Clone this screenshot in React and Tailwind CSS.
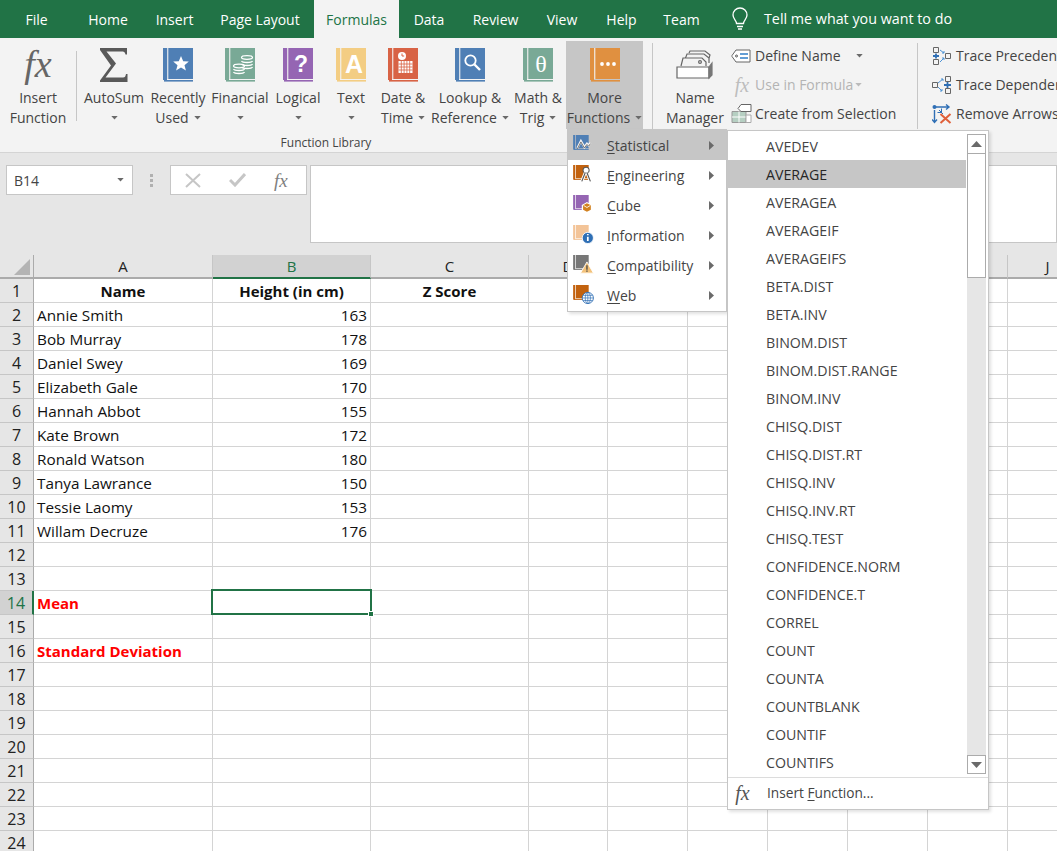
import React from 'react';

const UI = "font-['Open_Sans','Noto_Sans',sans-serif]";

const tabs = [
  ['File', 'w-[73px]'],
  ['Home', 'w-[70px]'],
  ['Insert', 'w-[63px]'],
  ['Page Layout', 'w-[108px]'],
  ['Formulas', 'w-[85px]'],
  ['Data', 'w-[60px]'],
  ['Review', 'w-[73px]'],
  ['View', 'w-[60px]'],
  ['Help', 'w-[59px]'],
  ['Team', 'w-[61px]'],
];

const functionNames = [
  'AVEDEV', 'AVERAGE', 'AVERAGEA', 'AVERAGEIF', 'AVERAGEIFS', 'BETA.DIST', 'BETA.INV', 'BINOM.DIST',
  'BINOM.DIST.RANGE', 'BINOM.INV', 'CHISQ.DIST', 'CHISQ.DIST.RT', 'CHISQ.INV', 'CHISQ.INV.RT', 'CHISQ.TEST',
  'CONFIDENCE.NORM', 'CONFIDENCE.T', 'CORREL', 'COUNT', 'COUNTA', 'COUNTBLANK', 'COUNTIF', 'COUNTIFS',
];

const people = [
  ['Annie Smith', 163], ['Bob Murray', 178], ['Daniel Swey', 169], ['Elizabeth Gale', 170], ['Hannah Abbot', 155],
  ['Kate Brown', 172], ['Ronald Watson', 180], ['Tanya Lawrance', 150], ['Tessie Laomy', 153], ['Willam Decruze', 176],
];

const colHeaders = ['A', 'B', 'C', 'D', 'E', 'F', 'G', 'H', 'I', 'J'];
const sheetCols = 'grid grid-cols-[34px_179px_158px_158px_79px_80px_80px_80px_80px_80px_80px]';

const Caret = ({ className = '' }) => (
  <svg width="7" height="4" viewBox="0 0 8 5" className={`inline-block ${className}`}>
    <path d="M0 0h8L4 4.500z" fill="#6a6a6a" />
  </svg>
);

const Book = ({ color, children }) => (
  <svg width="30" height="34" viewBox="0 0 30 34">
    <rect x="0" y="0" width="4" height="32" fill={color} />
    <rect x="4" y="0" width="26" height="31" fill={color} />
    <rect x="4.200" y="0" width="1.100" height="31" fill="#f3f3f3" />
    <rect x="1" y="32" width="29" height="1.600" fill={color} />
    {children}
  </svg>
);

const Coins = () => (
  <g fill="none" stroke="#fff" strokeWidth="1.300">
    <ellipse cx="22" cy="9.500" rx="5.500" ry="1.800" />
    <path d="M16.500 13c1 2 10 2 11 0M16.500 16c1 2 10 2 11 0M16.500 19c1 2 10 2 11 0" />
    <ellipse cx="14" cy="18" rx="5.500" ry="1.800" />
    <path d="M8.500 21c1 2 10 2 11 0M8.500 24c1 2 10 2 11 0" />
  </g>
);

function Sigma() {
  return (
    <svg width="30" height="34" viewBox="0 0 30 34">
      <path d="M1 0h27v6.500h-1.500C26 4 25 3.500 22 3.500H7.500L17 15.500 6.500 29.500H24c2 0 2.500-1 3-3.500h1.500v8H1v-1.500L12 17.500 1 2z" fill="#595959" />
    </svg>
  );
}

const bigButtons = [
  { lines: ['AutoSum', ''], w: 'w-[64px]', icon: <Sigma /> },
  { lines: ['Recently', 'Used'], w: 'w-[60px]', icon: <Book color="#4f7fb5"><path d="M18 8l2.200 5.200 5.600.4-4.300 3.600 1.400 5.400-4.900-3-4.900 3 1.400-5.400-4.300-3.600 5.600-.4z" fill="#fff" /></Book> },
  { lines: ['Financial', ''], w: 'w-[60px]', icon: <Book color="#79a996"><Coins /></Book> },
  { lines: ['Logical', ''], w: 'w-[52px]', icon: <Book color="#9565b3"><text x="18" y="24" textAnchor="middle" fontSize="23" fontWeight="700" fill="#fff" fontFamily="Liberation Sans">?</text></Book> },
  { lines: ['Text', ''], w: 'w-[50px]', icon: <Book color="#f3cd83"><text x="18" y="25" textAnchor="middle" fontSize="25" fontWeight="700" fill="#fff" fontFamily="Liberation Sans">A</text></Book> },
  {
    lines: ['Date &', 'Time'],
    w: 'w-[50px]',
    icon: (
      <Book color="#d86345">
        <circle cx="14" cy="8" r="4" fill="#fff" />
        <path d="M14 5.500V8h2.200" stroke="#d86345" strokeWidth="1" fill="none" />
        <path d="M10.500 13h14v12h-14z" fill="#fff" />
        <path d="M13.300 13v12M16.100 13v12M18.900 13v12M21.700 13v12M10.500 16h14M10.500 19h14M10.500 22h14" stroke="#d86345" strokeWidth="0.800" />
      </Book>
    ),
  },
  {
    lines: ['Lookup &', 'Reference'],
    w: 'w-[80px]',
    icon: (
      <Book color="#4f7fb5">
        <circle cx="15.500" cy="12.500" r="5.200" fill="none" stroke="#fff" strokeWidth="1.800" />
        <path d="M19.500 16.500l5.500 5.500" stroke="#fff" strokeWidth="2.400" />
      </Book>
    ),
  },
  { lines: ['Math &', 'Trig'], w: 'w-[52px]', icon: <Book color="#79a996"><text x="18" y="24" textAnchor="middle" fontSize="24" fill="#fff" fontFamily="Liberation Serif">θ</text></Book> },
];

const Fx = ({ className }) => <span className={`font-['Liberation_Serif',serif] italic ${className}`}>fx</span>;

const RibbonButton = ({ lines, w, icon, active }) => (
  <div className={`${w} flex flex-col items-center pt-[7px] h-[88px] shrink-0 ${active ? 'bg-[#c6c6c6]' : ''}`}>
    <div className="h-[40px] flex items-start">{icon}</div>
    <div className="h-[20px] leading-[20px] whitespace-nowrap">{lines[0]}</div>
    <div className="h-[20px] leading-[20px] whitespace-nowrap flex items-center gap-[5px]">
      {lines[1]}
      <Caret />
    </div>
  </div>
);

const NameManagerIcon = () => (
  <svg width="38" height="36" viewBox="0 0 38 36" fill="none" stroke="#666" strokeWidth="1.200">
    <path d="M8 14l3-8h17l5 4v5" />
    <path d="M13 5l1-2h15l5 4-1 3" />
    <path d="M5 18l2-8h19l4 4v4" fill="#f3f3f3" />
    <circle cx="24" cy="14" r="1.400" />
    <path d="M1 19h32v11H1z" fill="#fff" />
    <path d="M33 19l3-4v12l-3 3z" fill="#777" stroke="#777" />
  </svg>
);

const DefineIcon = () => (
  <svg width="20" height="14" viewBox="0 0 20 14" fill="none">
    <path d="M5 1h14v12H5L1 7.500V6.500z" stroke="#666" fill="#fff" />
    <circle cx="5.500" cy="7" r="1" stroke="#555" />
    <path d="M9 5h8M9 9h8" stroke="#2f7ec7" strokeWidth="1.300" />
  </svg>
);

const CreateIcon = () => (
  <svg width="22" height="20" viewBox="0 0 22 20" fill="none">
    <path d="M1 7.500h14v11H1z" fill="#b6cfc2" stroke="#999" />
    <path d="M8 7.500v11M1 13h14" stroke="#fff" />
    <path d="M10 .5h10v7H10L7 4.500z" fill="#fff" stroke="#666" />
    <path d="M15 11h5v7.500h-5z" fill="#fff" stroke="#aaa" />
  </svg>
);

const TracePrecedents = () => (
  <svg width="20" height="18" viewBox="0 0 20 18" fill="none">
    <path d="M1.500 .5h5v5h-5zM13.500 6.500h5v5h-5zM1.500 12.500h5v5h-5z" stroke="#666" />
    <path d="M1 9h6M4 6.500v5" stroke="#2f6fb5" strokeWidth="1.800" />
    <path d="M8 3l4 3M8 15l4-4M12 6V4M12 6h-2M12 11v2M12 11h-2" stroke="#4d93d6" />
  </svg>
);

const TraceDependents = () => (
  <svg width="20" height="18" viewBox="0 0 20 18" fill="none">
    <path d="M.5 6.500h5v5h-5zM13.500 .5h5v5h-5zM13.500 12.500h5v5h-5z" stroke="#666" />
    <path d="M12 9h7M15.500 6v6" stroke="#2f6fb5" strokeWidth="1.800" />
    <path d="M6 7l5-4M6 11l4 4M11 3H9M11 3v2M10 15H8M10 15v-2" stroke="#4d93d6" />
  </svg>
);

const RemoveArrows = () => (
  <svg width="20" height="20" viewBox="0 0 20 20" fill="none">
    <circle cx="2.500" cy="3" r="2" fill="#2f6fb5" />
    <path d="M4 3h13M14 .5L17 3l-3 2.500M2.500 6v12M0 15.500L2.500 18.500 5 15.500" stroke="#2f6fb5" strokeWidth="1.400" />
    <path d="M7 6l4 4M5.500 8.500h4v-4" stroke="#2f6fb5" />
    <path d="M8.500 10l10 9M18.500 10l-10 9" stroke="#e0603a" strokeWidth="2" />
  </svg>
);

const MenuBook = ({ color, children }) => (
  <svg width="21" height="19" viewBox="0 0 24 22" className="shrink-0">
    <rect x="0" y="0" width="2.500" height="17" fill={color} />
    <rect x="3.300" y="0" width="14.700" height="15.500" fill={color} />
    <rect x="1" y="16.300" width="17" height="1" fill={color} />
    {children}
  </svg>
);

const subMenus = [
  {
    label: 'Statistical',
    icon: (
      <MenuBook color="#4f7fb5">
        <path d="M5 15l4-8 4 7 3-4 2 2 2-3" fill="none" stroke="#f3f3f3" strokeWidth="2.600" />
        <path d="M5 16l4-8 4 7 3-4 2 2 2-3" fill="none" stroke="#666" />
      </MenuBook>
    ),
  },
  {
    label: 'Engineering',
    icon: (
      <MenuBook color="#c2620f">
        <circle cx="15" cy="6" r="3.500" fill="#fff" stroke="#555" strokeWidth="1.200" />
        <path d="M14 9l-4 10M16 9l4 10" stroke="#fff" strokeWidth="3.500" />
        <path d="M14 9l-4 10M16 9l4 10" stroke="#555" strokeWidth="1.300" />
      </MenuBook>
    ),
  },
  {
    label: 'Cube',
    icon: (
      <MenuBook color="#9565b3">
        <path d="M16 8l6 3.500v6.500l-6 3.500-6-3.500v-6.500z" fill="#fff" />
        <path d="M16 9.500l4.500 2.500v5L16 19.500 11.500 17v-5z" fill="#d2811f" />
        <path d="M12 12l4 2.500 4-2.500" stroke="#fff" fill="none" />
      </MenuBook>
    ),
  },
  {
    label: 'Information',
    icon: (
      <MenuBook color="#f3c498">
        <circle cx="17" cy="15" r="6.500" fill="#2f6fb5" stroke="#fff" />
        <path d="M17 13.500v5M17 10.500v1.500" stroke="#fff" strokeWidth="2" />
      </MenuBook>
    ),
  },
  {
    label: 'Compatibility',
    icon: (
      <MenuBook color="#777">
        <path d="M16 8l7.500 13h-15z" fill="#f3c27a" stroke="#fff" />
        <path d="M16 12v5M16 18v1.500" stroke="#444" strokeWidth="1.500" />
      </MenuBook>
    ),
  },
  {
    label: 'Web',
    icon: (
      <MenuBook color="#c2620f">
        <circle cx="17" cy="15" r="6.500" fill="#fff" stroke="#2f6fb5" />
        <path d="M10.500 15h13M17 8.500v13M11.500 12h11M11.500 18h11" stroke="#2f6fb5" strokeWidth="0.800" />
        <ellipse cx="17" cy="15" rx="3" ry="6.500" fill="none" stroke="#2f6fb5" strokeWidth="0.800" />
      </MenuBook>
    ),
  },
];

const Underlined = ({ text }) => (
  <span>
    <span className="underline underline-offset-2">{text[0]}</span>
    {text.slice(1)}
  </span>
);

const Row = ({ num, a, b, c, aClass = '', selected }) => (
  <div className={`${sheetCols} h-[24px]`}>
    <div className={`h-[24px] flex items-center justify-center border-r border-b text-[16px] ${selected ? 'bg-[#d2d2d2] text-[#217346] border-r-2 border-r-[#217346] border-b-[#c6c6c6]' : 'bg-[#e6e6e6] text-[#222] border-r-[#ababab] border-b-[#c6c6c6]'}`}>
      {num}
    </div>
    <div className={`h-[24px] border-r border-b border-[#d4d4d4] px-[3px] leading-[24px] whitespace-nowrap ${aClass}`}>{a}</div>
    <div className="relative h-[24px] border-r border-b border-[#d4d4d4] px-[3px] leading-[24px] whitespace-nowrap">
      {b}
      {selected && (
        <div className="absolute left-[-2px] top-[-2px] w-[161px] h-[26px] border-2 border-[#217346] z-10">
          <div className="absolute right-[-4px] bottom-[-4px] w-[6px] h-[6px] bg-[#217346] border border-white" />
        </div>
      )}
    </div>
    <div className="h-[24px] border-r border-b border-[#d4d4d4] text-center font-bold text-[15px] leading-[24px]">{c}</div>
    {[0, 1, 2, 3, 4, 5, 6].map((i) => (
      <div key={i} className="h-[24px] border-r border-b border-[#d4d4d4]" />
    ))}
  </div>
);

const App = () => {
  const rows = Array.from({ length: 24 }, (_, i) => i + 1);

  return (
    <div className={`${UI} relative w-[1057px] h-[851px] overflow-hidden bg-white text-[14px] text-[#444]`}>
      {/* Tabs */}
      <div className="flex items-center h-[38px] bg-[#217346] text-[14px] text-white">
        {tabs.map(([label, w]) => (
          <div
            key={label}
            className={`${w} h-full flex items-center justify-center ${label === 'Formulas' ? 'bg-[#f3f3f3] text-[#217346]' : ''}`}
          >
            {label}
          </div>
        ))}
        <svg width="18" height="24" viewBox="0 0 18 24" fill="none" stroke="#fff" strokeWidth="1.300" className="ml-[19px]">
          <path d="M5.500 16.500c0-3-3.500-4.500-3.500-8.500a7 7 0 0 1 14 0c0 4-3.500 5.500-3.500 8.500z" />
          <path d="M6 19.500h6M7 22h4" />
        </svg>
        <span className="ml-[15px] text-[14.300px]">Tell me what you want to do</span>
      </div>

      {/* Ribbon */}
      <div className="relative flex h-[115px] bg-[#f3f3f3] border-b border-[#d4d4d4] overflow-hidden">
        <div className="flex flex-col w-[652px] shrink-0">
          <div className="flex h-[91px] pt-[3px]">
            <div className="w-[76px] shrink-0 pt-[5px] flex flex-col items-center">
              <div className="h-[42px] flex items-start">
                <Fx className="text-[38px] leading-[36px] text-[#666]" />
              </div>
              <div className="h-[20px] leading-[20px]">Insert</div>
              <div className="h-[20px] leading-[20px]">Function</div>
            </div>
            <div className="w-px h-[70px] mt-[10px] bg-[#c6c6c6] shrink-0" />
            <div className="flex gap-[2px] ml-[5px]">
              {bigButtons.map((b) => (
                <RibbonButton key={b.lines[0]} {...b} />
              ))}
              <RibbonButton
                lines={['More', 'Functions']}
                w="w-[77px]"
                active
                icon={
                  <Book color="#e09040">
                    <circle cx="12" cy="16" r="1.900" fill="#fff" />
                    <circle cx="18" cy="16" r="1.900" fill="#fff" />
                    <circle cx="24" cy="16" r="1.900" fill="#fff" />
                  </Book>
                }
              />
            </div>
          </div>
          <div className="text-center text-[12px] leading-[16px] text-[#444] mt-[6px]">Function Library</div>
        </div>
        <div className="w-px h-[86px] mt-[5px] bg-[#c6c6c6] shrink-0" />

        {/* Defined names */}
        <div className="flex w-[264px] shrink-0">
          <div className="w-[78px] shrink-0 pl-[6px] pt-[10px] flex flex-col items-center">
            <div className="h-[40px]"><NameManagerIcon /></div>
            <div className="h-[20px] leading-[20px]">Name</div>
            <div className="h-[20px] leading-[20px]">Manager</div>
          </div>
          <div className="flex flex-col pt-[3px]">
            <div className="h-[29px] flex items-center gap-[4px]">
              <DefineIcon />
              <span>Define Name</span>
              <Caret className="ml-[11px]" />
            </div>
            <div className="h-[29px] flex items-center gap-[2px] text-[#b4b4b4]">
              <Fx className="text-[20px] w-[22px] text-center text-[#bdbdbd]" />
              <span>Use in Formula</span>
              <Caret className="opacity-40" />
            </div>
            <div className="h-[29px] flex items-center gap-[2px]">
              <CreateIcon />
              <span>Create from Selection</span>
            </div>
          </div>
        </div>
        <div className="w-px h-[86px] mt-[5px] bg-[#c6c6c6] shrink-0" />

        {/* Formula auditing */}
        <div className="flex flex-col shrink-0 pl-[14px] pt-[3px] whitespace-nowrap">
          <div className="h-[29px] flex items-center gap-[4px]"><TracePrecedents /><span>Trace Precedents</span></div>
          <div className="h-[29px] flex items-center gap-[4px]"><TraceDependents /><span>Trace Dependents</span></div>
          <div className="h-[29px] flex items-center gap-[4px]"><RemoveArrows /><span>Remove Arrows</span></div>
        </div>
      </div>

      {/* Formula bar */}
      <div className="flex items-start h-[102px] bg-[#e6e6e6] pt-[12px] pl-[6px]">
        <div className="w-[127px] h-[30px] bg-white border border-[#c6c6c6] flex items-center justify-between pl-[7px] pr-[8px]">
          <span>B14</span>
          <Caret />
        </div>
        <div className="w-[37px] h-[30px] flex flex-col items-center justify-center gap-[2px]">
          <span className="w-[3px] h-[3px] bg-[#b0b0b0]" />
          <span className="w-[3px] h-[3px] bg-[#b0b0b0]" />
          <span className="w-[3px] h-[3px] bg-[#b0b0b0]" />
        </div>
        <div className="w-[137px] h-[30px] bg-white border border-[#c6c6c6] flex items-center gap-[28px] pl-[14px]">
          <svg width="16" height="15" viewBox="0 0 16 15"><path d="M1 1l14 13M15 1L1 14" stroke="#c6c6c6" strokeWidth="2" /></svg>
          <svg width="17" height="14" viewBox="0 0 17 14"><path d="M1 7l5 5L16 1" stroke="#c6c6c6" strokeWidth="3" fill="none" /></svg>
          <Fx className="text-[19px] leading-none text-[#808080]" />
        </div>
        <div className="ml-[3px] flex-1 h-[78px] bg-white border border-[#c6c6c6]" />
      </div>

      {/* Sheet */}
      <div className="text-[15.300px] text-[#111]">
        <div className={`${sheetCols} h-[24px] bg-[#e6e6e6] text-[15px] leading-[22px] text-[#222]`}>
          <div className="relative h-[24px] border-r border-b-2 border-[#ababab]">
            <svg width="16" height="16" viewBox="0 0 16 16" className="absolute left-[14px] top-[4px]">
              <path d="M16 0v16H0z" fill="#b4b4b4" />
            </svg>
          </div>
          {colHeaders.map((h) => (
            <div
              key={h}
              className={`h-[24px] text-center border-r border-b-2 ${h === 'B' ? 'bg-[#d2d2d2] text-[#217346] border-r-[#c6c6c6] border-b-[#217346]' : 'border-r-[#c6c6c6] border-b-[#ababab]'}`}
            >
              {h}
            </div>
          ))}
        </div>
        {rows.map((n) => {
          if (n === 1) return <Row key={n} num={n} a={<div className="text-center font-bold text-[15px]">Name</div>} b={<div className="text-center font-bold text-[15px]">Height (in cm)</div>} c="Z Score" />;
          if (n <= 11) return <Row key={n} num={n} a={people[n - 2][0]} b={<div className="text-right">{people[n - 2][1]}</div>} />;
          if (n === 14) return <Row key={n} num={n} a="Mean" aClass="font-bold text-[15px] text-[#ff0000]" selected />;
          if (n === 16) return <Row key={n} num={n} a="Standard Deviation" aClass="font-bold text-[15px] text-[#ff0000]" />;
          return <Row key={n} num={n} />;
        })}
      </div>

      {/* More Functions menu */}
      <div className="absolute left-[567px] top-[129px] w-[160px] h-[183px] bg-white border border-[#c6c6c6] shadow-[2px_2px_3px_rgba(0,0,0,0.12)] z-20">
        {subMenus.map((m, i) => (
          <div key={m.label} className={`flex items-center h-[30px] pl-[5px] ${i === 0 ? 'bg-[#c6c6c6]' : ''}`}>
            <div className="w-[34px] h-[22px] shrink-0 pt-[1px]">{m.icon}</div>
            <div className="flex-1"><Underlined text={m.label} /></div>
            <svg width="5" height="9" viewBox="0 0 5 9" className="mr-[12px]"><path d="M0 0l5 4.500L0 9z" fill="#6a6a6a" /></svg>
          </div>
        ))}
      </div>

      {/* Function list */}
      <div className="absolute left-[727px] top-[130px] w-[262px] h-[680px] bg-white border border-[#c6c6c6] shadow-[2px_2px_3px_rgba(0,0,0,0.12)] z-30 flex flex-col">
        <div className="flex h-[645px] pt-[1px]">
          <div className="w-[238px] shrink-0">
            {functionNames.map((f) => (
              <div key={f} className={`h-[28px] leading-[29px] pl-[38px] text-[14.200px] whitespace-nowrap ${f === 'AVERAGE' ? 'bg-[#c6c6c6] text-[#262626]' : ''}`}>
                {f}
              </div>
            ))}
          </div>
          <div className="w-[19px] ml-[1px] mt-[2px] flex flex-col h-[640px] bg-[#e6e6e6]">
            <div className="h-[20px] bg-white border border-[#ababab] flex items-center justify-center">
              <svg width="11" height="6" viewBox="0 0 11 6"><path d="M0 6h11L5.500 0z" fill="#6a6a6a" /></svg>
            </div>
            <div className="h-[124px] bg-white border border-[#ababab] border-t-0" />
            <div className="flex-1" />
            <div className="h-[19px] bg-white border border-[#ababab] flex items-center justify-center">
              <svg width="11" height="6" viewBox="0 0 11 6"><path d="M0 0h11L5.500 6z" fill="#6a6a6a" /></svg>
            </div>
          </div>
        </div>
        <div className="h-px bg-[#dcdcdc] mt-[1px]" />
        <div className="flex items-center h-[32px]">
          <Fx className="w-[29px] mr-[10px] text-center text-[20px] text-[#555]" />
          <span className="text-[13.700px]"><span>Insert </span><span className="underline underline-offset-2">F</span>unction...</span>
        </div>
      </div>
    </div>
  );
};

export default App;
